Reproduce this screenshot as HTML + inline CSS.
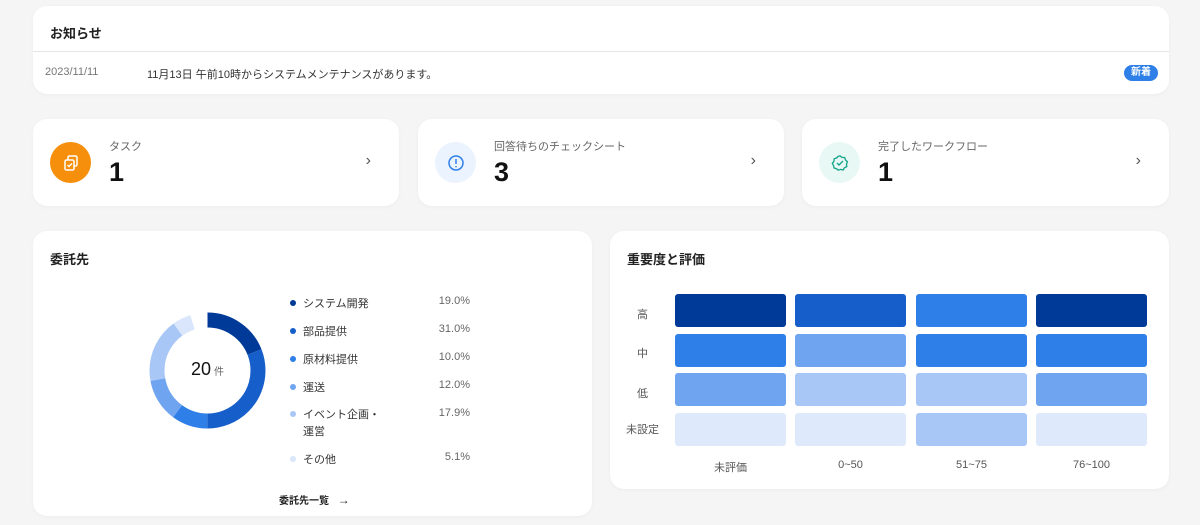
<!DOCTYPE html>
<html><head><meta charset="utf-8"><style>
*{box-sizing:border-box;margin:0;padding:0}
body{width:1200px;height:525px;background:#f5f5f5;font-family:"Liberation Sans","Noto Sans CJK JP",sans-serif;color:#222;position:relative;overflow:hidden}
.card{position:absolute;background:#fff;border-radius:14px;box-shadow:0 1px 4px rgba(0,0,0,.04)}
.abs{position:absolute}
.t{font-weight:bold;font-size:13px}
.stat .ic{position:absolute;left:17px;top:23px;width:41px;height:41px;border-radius:50%;display:flex;align-items:center;justify-content:center}
.stat .lb{position:absolute;left:76px;top:19px;font-size:11px;color:#666}
.stat .n{position:absolute;left:76px;top:38px;font-size:27px;font-weight:bold;color:#111}
.stat .ar{position:absolute;right:28px;top:33px;font-size:16px;color:#555}
.lg{position:absolute;left:257px;font-size:11px;color:#333}
.lg i{display:inline-block;width:6px;height:6px;border-radius:50%;margin-right:7px;vertical-align:1px}
.pc{position:absolute;right:122px;font-size:11px;color:#666}
.c{position:absolute;width:111px;height:33px;border-radius:3px}
.rl{position:absolute;font-size:11px;color:#555}
</style></head><body>
<div class="card" style="left:33px;top:6px;width:1136px;height:88px">
 <div class="abs t" style="left:17px;top:17px">お知らせ</div>
 <div class="abs" style="left:0;top:45px;width:100%;height:1px;background:#e5e5e5"></div>
 <div class="abs" style="left:12px;top:60px;font-size:11px;color:#777">2023/11/11</div>
 <div class="abs" style="left:114px;top:60px;font-size:11px;color:#333">11月13日 午前10時からシステムメンテナンスがあります。</div>
 <div class="abs" style="left:1091px;top:59px;width:34px;height:16px;border-radius:8px;background:#2f7fe8;color:#fff;font-size:10px;font-weight:bold;text-align:center;line-height:16px">新着</div>
</div>
<div class="card stat" style="left:33px;top:119px;width:366px;height:87px">
 <div class="ic" style="background:#f68f0c"><svg width="18" height="18" viewBox="0 0 18 18" fill="none" stroke="#fff" stroke-width="1.5"><rect x="6" y="2" width="9" height="10" rx="1.5"/><rect x="3" y="6" width="9" height="10" rx="1.5" fill="#f68f0c"/><path d="M5.5 11l1.5 1.5 3-3"/></svg></div>
 <div class="lb">タスク</div><div class="n">1</div><div class="ar">›</div>
</div>
<div class="card stat" style="left:418px;top:119px;width:366px;height:87px">
 <div class="ic" style="background:#ebf3fe"><svg width="18" height="18" viewBox="0 0 18 18" fill="none" stroke="#2f7fe8" stroke-width="1.5"><circle cx="9" cy="9" r="7"/><path d="M9 5v5M9 12v1.2"/></svg></div>
 <div class="lb">回答待ちのチェックシート</div><div class="n">3</div><div class="ar">›</div>
</div>
<div class="card stat" style="left:802px;top:119px;width:367px;height:87px">
 <div class="ic" style="background:#e8f8f5"><svg width="18" height="18" viewBox="0 0 18 18" fill="none" stroke="#16a58a" stroke-width="1.4"><path d="M9 1.5l2.2 1.6 2.7.1.9 2.6 2 1.8-1 2.5.3 2.7-2.4 1.2-1.4 2.3-2.7-.6-2.6.8L5.3 15l-2.6-.8-.6-2.7L.9 9.3l1.7-2.1.2-2.7 2.6-.8L7 2z" transform="scale(.95) translate(.5 .5)"/><path d="M6 9l2 2 4-4"/></svg></div>
 <div class="lb">完了したワークフロー</div><div class="n">1</div><div class="ar">›</div>
</div>
<div class="card" style="left:33px;top:231px;width:559px;height:285px">
 <div class="abs t" style="left:17px;top:18px">委託先</div>
 <svg class="abs" style="left:116px;top:81px" width="117" height="117" viewBox="0 0 117 117">
  <g transform="rotate(-90 58.5 58.5)" fill="none" stroke-width="15">
   <circle cx="58.5" cy="58.5" r="50.5" stroke="#003a99" stroke-dasharray="60.3 317.3" stroke-dashoffset="0"/>
   <circle cx="58.5" cy="58.5" r="50.5" stroke="#165ec9" stroke-dasharray="98.4 317.3" stroke-dashoffset="-60.3"/>
   <circle cx="58.5" cy="58.5" r="50.5" stroke="#2f7fe8" stroke-dasharray="31.7 317.3" stroke-dashoffset="-158.7"/>
   <circle cx="58.5" cy="58.5" r="50.5" stroke="#6fa4f0" stroke-dasharray="38.1 317.3" stroke-dashoffset="-190.4"/>
   <circle cx="58.5" cy="58.5" r="50.5" stroke="#a8c7f6" stroke-dasharray="56.8 317.3" stroke-dashoffset="-228.5"/>
   <circle cx="58.5" cy="58.5" r="50.5" stroke="#d9e6fb" stroke-dasharray="16.2 317.3" stroke-dashoffset="-285.3"/>
  </g>
 </svg>
 <div class="abs" style="left:158px;top:128px;font-size:18px;color:#111">20<span style="font-size:10px;color:#666;margin-left:3px">件</span></div>
 <div class="lg" style="top:64px"><i style="background:#003a99"></i>システム開発</div><div class="pc" style="top:64px">19.0%</div>
 <div class="lg" style="top:92px"><i style="background:#165ec9"></i>部品提供</div><div class="pc" style="top:92px">31.0%</div>
 <div class="lg" style="top:120px"><i style="background:#2f7fe8"></i>原材料提供</div><div class="pc" style="top:120px">10.0%</div>
 <div class="lg" style="top:148px"><i style="background:#6fa4f0"></i>運送</div><div class="pc" style="top:148px">12.0%</div>
 <div class="lg" style="top:176px;line-height:17px"><i style="background:#a8c7f6"></i>イベント企画・<br><span style="margin-left:13px">運営</span></div><div class="pc" style="top:176px">17.9%</div>
 <div class="lg" style="top:220px"><i style="background:#d9e6fb"></i>その他</div><div class="pc" style="top:220px">5.1%</div>
 <div class="abs" style="left:246px;top:261px;font-size:10px;font-weight:bold">委託先一覧 <span style="margin-left:6px;font-size:12px">→</span></div>
</div>
<div class="card" style="left:610px;top:231px;width:559px;height:258px">
 <div class="abs t" style="left:17px;top:18px">重要度と評価</div>
 <div class="rl" style="left:27px;top:75px">高</div><div class="rl" style="left:27px;top:114px">中</div><div class="rl" style="left:27px;top:154px">低</div><div class="rl" style="left:16px;top:190px">未設定</div>
 <div class="c" style="left:65px;top:63px;background:#003a99"></div><div class="c" style="left:185px;top:63px;background:#165ec9"></div><div class="c" style="left:306px;top:63px;background:#2f7fe8"></div><div class="c" style="left:426px;top:63px;background:#003a99"></div>
 <div class="c" style="left:65px;top:103px;background:#2f7fe8"></div><div class="c" style="left:185px;top:103px;background:#6fa4f0"></div><div class="c" style="left:306px;top:103px;background:#2f7fe8"></div><div class="c" style="left:426px;top:103px;background:#2f7fe8"></div>
 <div class="c" style="left:65px;top:142px;background:#6fa4f0"></div><div class="c" style="left:185px;top:142px;background:#a8c7f6"></div><div class="c" style="left:306px;top:142px;background:#a8c7f6"></div><div class="c" style="left:426px;top:142px;background:#6fa4f0"></div>
 <div class="c" style="left:65px;top:182px;background:#deeafc"></div><div class="c" style="left:185px;top:182px;background:#deeafc"></div><div class="c" style="left:306px;top:182px;background:#a8c7f6"></div><div class="c" style="left:426px;top:182px;background:#deeafc"></div>
 <div class="rl" style="left:65px;width:111px;text-align:center;top:228px">未評価</div><div class="rl" style="left:185px;width:111px;text-align:center;top:228px">0~50</div><div class="rl" style="left:306px;width:111px;text-align:center;top:228px">51~75</div><div class="rl" style="left:426px;width:111px;text-align:center;top:228px">76~100</div>
</div>
</body></html>
